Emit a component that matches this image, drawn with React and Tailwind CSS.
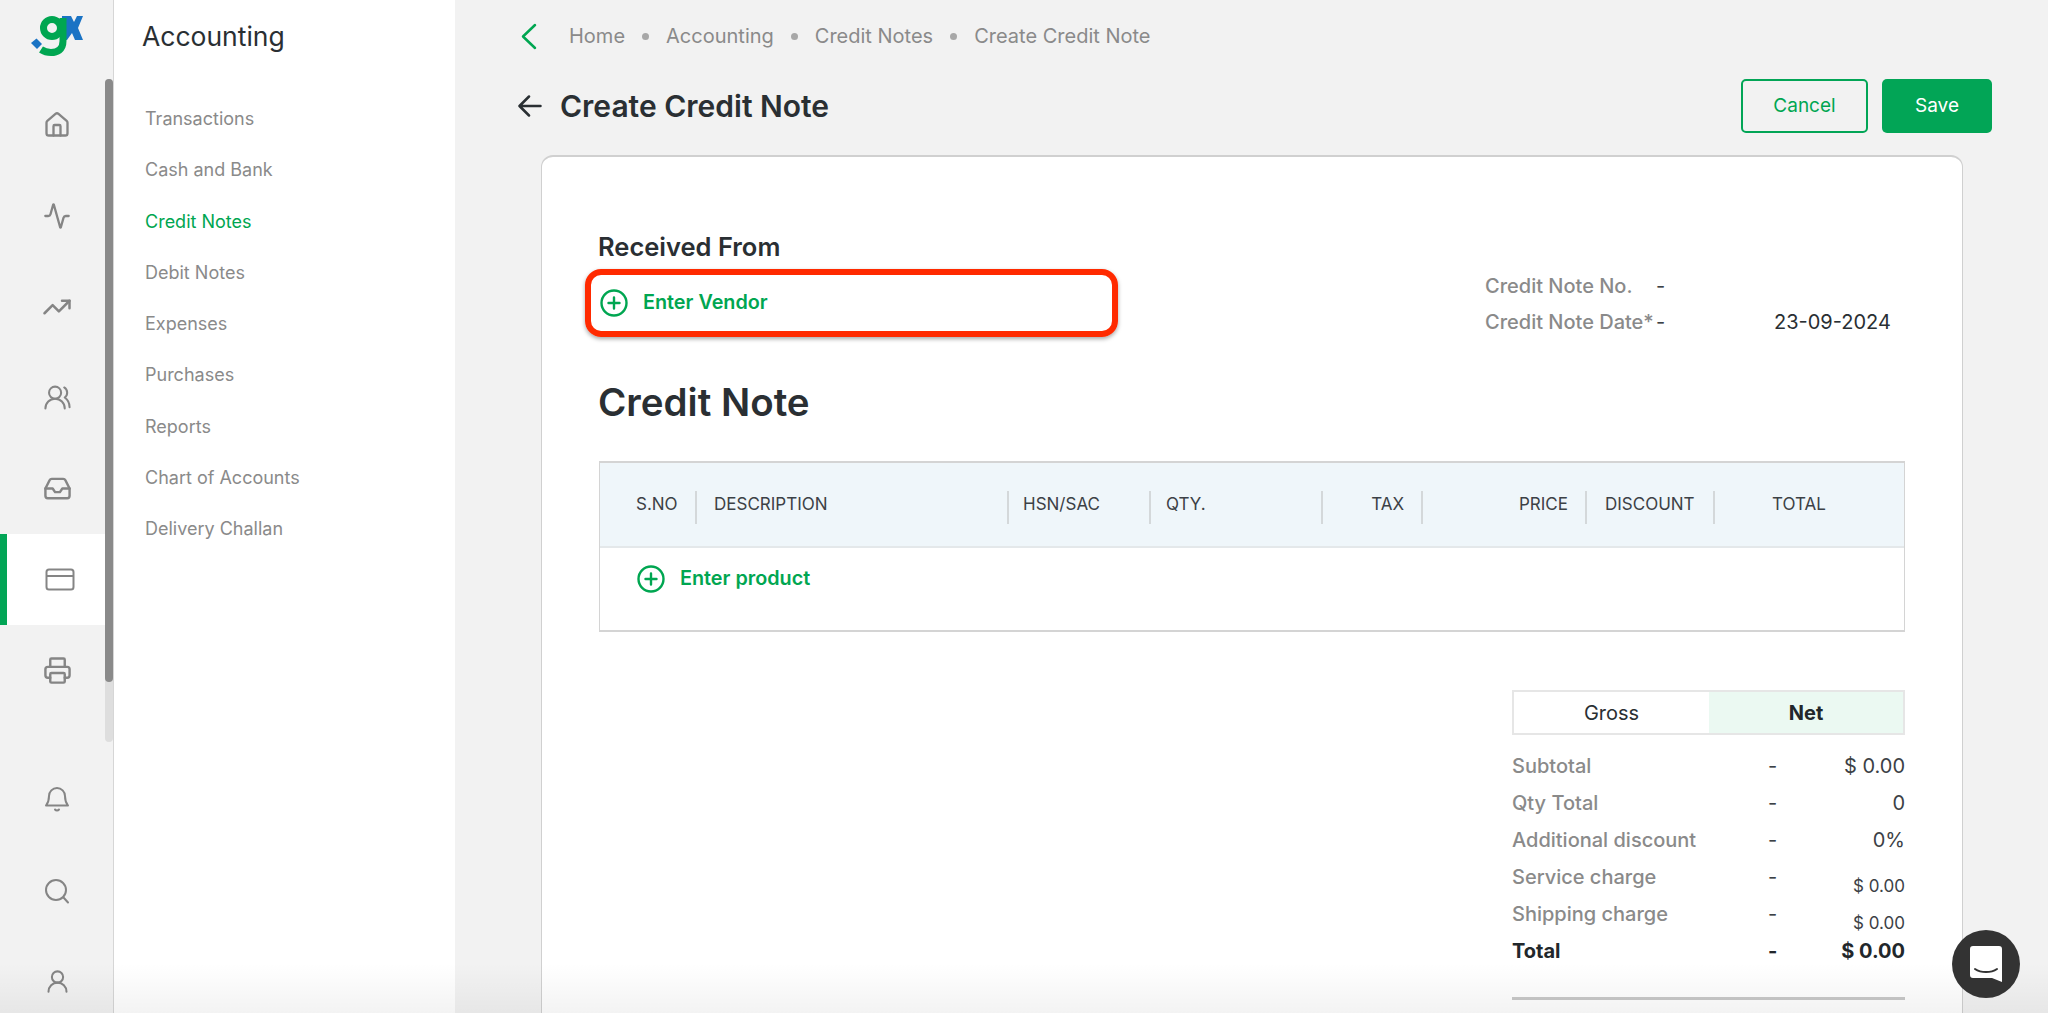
import React from 'react';
import { Activity, TrendingUp, UsersRound, Inbox, Printer, House, UserRound } from 'lucide-react';

const navItems = ['Transactions', 'Cash and Bank', 'Credit Notes', 'Debit Notes', 'Expenses', 'Purchases', 'Reports', 'Chart of Accounts', 'Delivery Challan'];

const crumbs = ['Home', 'Accounting', 'Credit Notes', 'Create Credit Note'];

const Logo = () => (
  <svg width="80" height="60" viewBox="0 0 80 60" className="ml-[20px] block">
    <path d="M42 11 L51 11 L54 17 L57 11 L63 11 L58 23 L63 35 L55 35 L52 28 L47 35 L41 35 Z" fill="#1a73c4" />
    <circle cx="32" cy="23" r="8.500" fill="none" stroke="#00a651" strokeWidth="7" />
    <path d="M43 13 L43 36 C43 45 37 47.500 31 47.500 C27 47.500 24 46.500 21 44.500" fill="none" stroke="#00a651" strokeWidth="7" />
    <path d="M11 38 L16.500 33.500 L22 39 L17 44 Z" fill="#1a73c4" />
  </svg>
);

const CardIcon = () => (
  <svg width="30" height="23" viewBox="0 0 30 23" fill="none" stroke="#858585" strokeWidth="2">
    <rect x="1.500" y="1.500" width="27" height="20" rx="2.500" />
    <path d="M1.500 8h27" />
  </svg>
);

const BellIcon = () => (
  <svg width="26" height="27" viewBox="0 0 26 27" fill="none" stroke="#858585" strokeWidth="2" strokeLinecap="round" strokeLinejoin="round">
    <path d="M5 10a8 8 0 0 1 16 0c0 5 1 7 3 9.500H2c2-2.500 3-4.500 3-9.500Z" />
    <path d="M11 23.500c1 1.200 3 1.200 4 0" />
  </svg>
);

const SearchIcon = () => (
  <svg width="26" height="26" viewBox="0 0 26 26" fill="none" stroke="#858585" strokeWidth="2" strokeLinecap="round">
    <circle cx="12" cy="12" r="10" />
    <path d="M19.500 19.500 24 24.500" />
  </svg>
);

const RailItem = ({ children, active }) => (
  <div className={`flex h-[91px] items-center justify-center ${active ? 'border-l-[7px] border-[#02a556] bg-white pl-[8px]' : 'pl-[9px]'}`}>
    {children}
  </div>
);

const PlusCircle = () => (
  <svg width="28" height="28" viewBox="0 0 28 28" fill="none" stroke="#00a651" strokeWidth="2.400" strokeLinecap="round" className="shrink-0">
    <circle cx="14" cy="14" r="12.500" />
    <path d="M14 8.500v11M8.500 14h11" />
  </svg>
);

const Rail = () => (
  <aside className="relative h-full w-[114px] shrink-0 overflow-hidden border-r border-[#d6d6d6] bg-[#f2f2f2]">
    <div className="h-[79px] w-[105px] pt-[5px]">
      <Logo />
    </div>
    <div className="w-[105px]">
      <RailItem><House size={28} color="#858585" strokeWidth={2} /></RailItem>
      <RailItem><Activity size={28} color="#858585" strokeWidth={2} /></RailItem>
      <RailItem><TrendingUp size={30} color="#858585" strokeWidth={2} /></RailItem>
      <RailItem><UsersRound size={29} color="#858585" strokeWidth={1.7} /></RailItem>
      <RailItem><Inbox size={29} color="#858585" strokeWidth={2} /></RailItem>
      <RailItem active><CardIcon /></RailItem>
      <RailItem><Printer size={29} color="#858585" strokeWidth={2} /></RailItem>
      <div className="h-[38px]" />
      <RailItem><BellIcon /></RailItem>
      <RailItem><SearchIcon /></RailItem>
      <RailItem><UserRound size={27} color="#858585" strokeWidth={1.8} /></RailItem>
    </div>
    {/* scrollbar */}
    <div className="absolute left-[105px] top-[79px] h-[663px] w-[8px] rounded-full bg-[#dedede]">
      <div className="h-[603px] w-full rounded-full bg-[#8a8a8a]" />
    </div>
  </aside>
);

const Sidebar = () => (
  <aside className="h-full w-[341px] shrink-0 bg-white pl-[28px]">
    <h2 className="pt-[18px] text-[26.500px] leading-[36px] font-normal text-[#2a2f33]">Accounting</h2>
    <nav className="mt-[39px] pl-[3px]">
      {navItems.map((item) => (
        <div
          key={item}
          className={`h-[51.250px] text-[18px] leading-[51px] ${item === 'Credit Notes' ? 'text-[#00a651]' : 'text-[#8a8a8a]'}`}
        >
          {item}
        </div>
      ))}
    </nav>
  </aside>
);

const Breadcrumb = () => (
  <div className="flex h-[72px] items-center pl-[65px]">
    <svg width="17" height="27" viewBox="0 0 17 27" fill="none" stroke="#00a651" strokeWidth="2.500" strokeLinecap="round" strokeLinejoin="round" className="mr-[32px] shrink-0">
      <path d="M15 2 3 13.500 15 25" />
    </svg>
    <div className="flex items-center text-[20px] text-[#8a8a8a]">
      {crumbs.map((c, i) => (
        <React.Fragment key={c}>
          {i > 0 && <span className="mx-[17px] h-[7px] w-[7px] rounded-full bg-[#a8a8a8]" />}
          <span>{c}</span>
        </React.Fragment>
      ))}
    </div>
  </div>
);

const columns = [
  { label: 'S.NO', w: 'w-[97px]', cls: 'pl-[36px]' },
  { label: 'DESCRIPTION', w: 'w-[312px]', cls: 'pl-[17px]' },
  { label: 'HSN/SAC', w: 'w-[142px]', cls: 'pl-[14px]' },
  { label: 'QTY.', w: 'w-[172px]', cls: 'pl-[15px]' },
  { label: 'TAX', w: 'w-[100px]', cls: 'justify-end pr-[17px]' },
  { label: 'PRICE', w: 'w-[164px]', cls: 'justify-end pr-[17px]' },
  { label: 'DISCOUNT', w: 'w-[128px]', cls: 'pl-[18px]' },
];

const ItemsTable = () => (
  <div className="ml-[1px] mt-[32px] h-[171px] w-[1306px] border border-y-2 border-[#d4d4d4]">
    <div className="flex h-[85px] border-b-2 border-[#e4e8ea] bg-[#eff6fa] pt-[28px]">
      {columns.map((c) => (
        <div key={c.label} className={`flex h-[33px] shrink-0 border-r-2 border-[#d4d8da] text-[17px] leading-[26px] text-[#3c4146] ${c.w} ${c.cls}`}>
          {c.label}
        </div>
      ))}
      <div className="pl-[57px] text-[17px] leading-[26px] text-[#3c4146]">TOTAL</div>
    </div>
    <div className="flex items-center gap-[15px] pl-[37px] pt-[16px]">
      <PlusCircle />
      <span className="text-[19.800px] font-semibold text-[#00a651]">Enter product</span>
    </div>
  </div>
);

const Row = ({ label, value, small, bold }) => (
  <div className={`flex h-[37px] items-start text-[20px] leading-[37px] ${bold ? 'font-bold text-[#22272b]' : ''}`}>
    <span className={`w-[256px] ${bold ? '' : 'font-medium text-[#8a8a8a]'}`}>{label}</span>
    <span className={`w-[20px] ${bold ? '' : 'text-[#3c4146]'}`}>-</span>
    <span className={`flex-1 text-right ${bold ? '' : 'text-[#3c4146]'} ${small ? 'mt-[9px] text-[17px]' : ''}`}>{value}</span>
  </div>
);

const Summary = () => (
  <div className="ml-auto mt-[58px] w-[393px]">
    <div className="flex h-[45px] border-2 border-[#e6e6e6] text-[20px] leading-[42px]">
      <div className="w-[195px] text-center text-[#2a2f33]">Gross</div>
      <div className="flex-1 bg-[#ebf9f2] text-center font-bold text-[#22272b]">Net</div>
    </div>
    <div className="mt-[13px]">
      <Row label="Subtotal" value="$ 0.00" />
      <Row label="Qty Total" value="0" />
      <Row label="Additional discount" value="0%" />
      <Row label="Service charge" value="$ 0.00" small />
      <Row label="Shipping charge" value="$ 0.00" small />
      <Row label="Total" value="$ 0.00" bold />
    </div>
    <div className="mt-[27px] h-[3px] bg-[#c8c8c8]" />
  </div>
);

const Card = () => (
  <div className="ml-[86px] h-[900px] w-[1422px] rounded-t-[12px] border border-t-2 border-[#d0d0d0] bg-white pl-[56px] pr-[57px]">
    <div className="flex">
      <div className="w-[533px]">
        <h3 className="mt-[72px] text-[25.500px] leading-[36px] font-semibold text-[#2a2f33]">Received From</h3>
        <div className="-ml-[13px] mt-[4px] flex h-[68px] w-[533px] items-center gap-[15px] rounded-[16px] border-[6px] border-[#ff2a00] pl-[9px] shadow-[0_2px_4px_rgba(0,0,0,0.35)]">
          <PlusCircle />
          <span className="text-[19.800px] font-semibold text-[#00a651]">Enter Vendor</span>
        </div>
      </div>
      <div className="ml-[354px] mt-[111px] text-[20px] leading-[36px]">
        <div className="flex">
          <span className="w-[171px] font-medium text-[#8a8a8a]">Credit Note No.</span>
          <span className="text-[#3c4146]">-</span>
        </div>
        <div className="flex">
          <span className="w-[171px] font-medium text-[#8a8a8a]">Credit Note Date*</span>
          <span className="w-[118px] text-[#3c4146]">-</span>
          <span className="text-[#2a2f33]">23-09-2024</span>
        </div>
      </div>
    </div>
    <h1 className="mt-[35px] text-[38.500px] leading-[54px] font-semibold text-[#2a2f33]">Credit Note</h1>
    <ItemsTable />
    <Summary />
  </div>
);

const ChatBubble = () => (
  <div className="absolute left-[1952px] top-[930px] flex h-[68px] w-[68px] items-center justify-center rounded-full bg-[#333333]">
    <svg width="32" height="36" viewBox="0 0 32 36">
      <path d="M3 0h26a3 3 0 0 1 3 3v33l-10-4H3a3 3 0 0 1-3-3V3a3 3 0 0 1 3-3Z" fill="#fff" />
      <path d="M5 23c6 4 16 4 22 0" fill="none" stroke="#333333" strokeWidth="2" strokeLinecap="round" />
    </svg>
  </div>
);

export default function App() {
  return (
    <div className="relative flex h-[1013px] w-[2048px] overflow-hidden bg-[#f2f2f2] font-['Inter',sans-serif]">
      <Rail />
      <Sidebar />
      <main className="min-w-0 flex-1">
        <Breadcrumb />
        <div className="flex h-[83px] pr-[56px]">
          <div className="flex h-[68px] items-center gap-[18px] pl-[63px]">
            <svg width="24" height="24" viewBox="0 0 24 24" fill="none" stroke="#2a2f33" strokeWidth="2.500" strokeLinecap="round" strokeLinejoin="round" className="shrink-0">
              <path d="M22.500 12H2M11 2.500 1.500 12l9.500 9.500" />
            </svg>
            <h1 className="text-[30px] font-semibold text-[#2a2f33]">Create Credit Note</h1>
          </div>
          <div className="ml-auto mt-[7px] flex h-[54px] gap-[14px] pt-0 text-[19px]">
            <button className="w-[127px] rounded-[5px] border-2 border-[#02a556] pt-[1px] text-[#00a651]">Cancel</button>
            <button className="w-[110px] rounded-[5px] bg-[#02a556] pt-[1px] text-white">Save</button>
          </div>
        </div>
        <Card />
      </main>
      {/* fade along the bottom edge of the page */}
      <div className="pointer-events-none absolute bottom-0 left-0 h-[50px] w-full bg-gradient-to-b from-transparent to-[#0000000c]" />
      <ChatBubble />
    </div>
  );
}
